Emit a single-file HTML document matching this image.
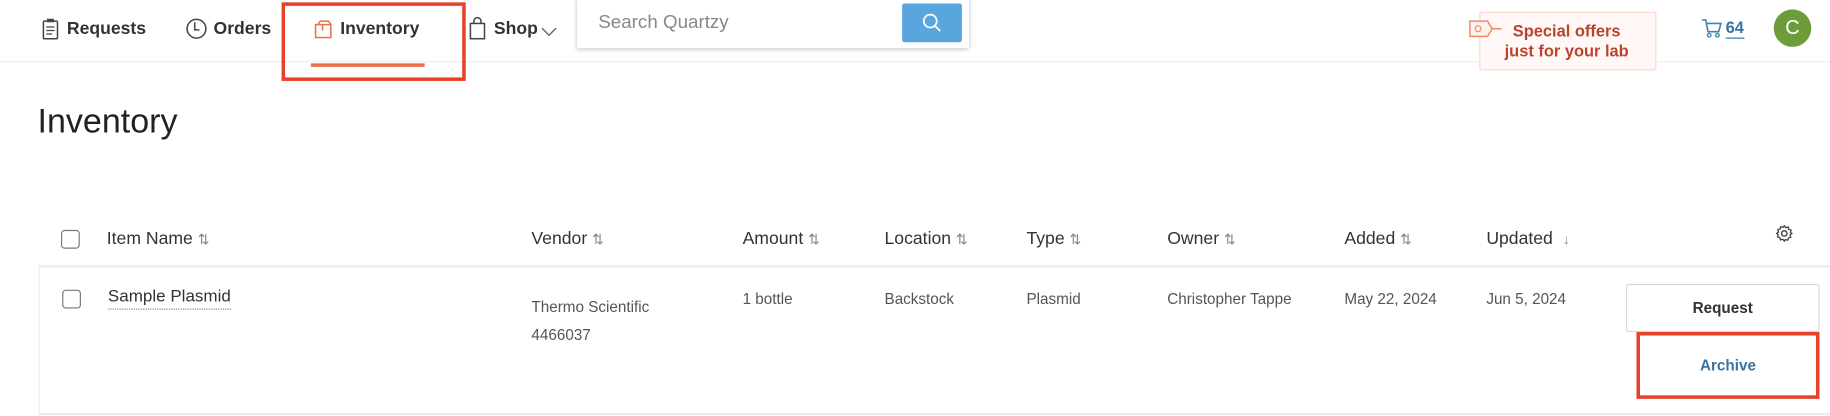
<!DOCTYPE html>
<html><head><meta charset="utf-8"><style>
html,body{margin:0;padding:0;background:#fff;overflow:hidden}
body{width:1830px;height:416px;font-family:"Liberation Sans",sans-serif;color:#2b2f33}
#s{position:absolute;left:0;top:0;width:1560px;height:355px;transform:scale(1.1731);transform-origin:0 0}
.a{position:absolute;white-space:nowrap}
.nav{font-size:15px;font-weight:bold;color:#2f3338;top:16px}
.hd{font-size:15px;color:#2f3338;top:195px}
.hd span{color:#888;font-size:12px}
.td{font-size:13px;color:#555;top:247px}
.cb{position:absolute;width:14px;height:14px;border:1.3px solid #777;border-radius:3px;background:#fff}
</style></head><body><div id="s">
<div class="a" style="left:0;top:52px;width:1560px;height:1px;background:#eee"></div>
<svg class="a" style="left:36px;top:15px" width="14" height="19" viewBox="0 0 14 19"><rect x="1" y="3" width="12" height="15" rx="1" fill="none" stroke="#444" stroke-width="1.3"/><rect x="4" y="1" width="6" height="3" fill="#444"/><path d="M3.5 8h7M3.5 11h7M3.5 14h5" stroke="#444" stroke-width="1"/></svg>
<div class="a nav" style="left:57px">Requests</div>
<svg class="a" style="left:158px;top:15px" width="19" height="19" viewBox="0 0 19 19"><circle cx="9.5" cy="9.5" r="8" fill="none" stroke="#444" stroke-width="1.3"/><path d="M8 4v6.5h4" fill="none" stroke="#444" stroke-width="1.3"/></svg>
<div class="a nav" style="left:182px">Orders</div>
<svg class="a" style="left:268px;top:17px" width="15" height="16" viewBox="0 0 15 16"><rect x="1" y="4" width="13" height="11" fill="none" stroke="#e8704a" stroke-width="1.3"/><path d="M3 4l2-3h7l2 3M7 4v5" fill="none" stroke="#e8704a" stroke-width="1.3"/></svg>
<div class="a nav" style="left:290px">Inventory</div>
<div class="a" style="left:265px;top:54px;width:97px;height:3px;background:#e8704a"></div>
<div class="a" style="left:240px;top:2px;width:151px;height:61px;border:3px solid #e8412a;box-sizing:content-box"></div>
<svg class="a" style="left:400px;top:14px" width="14" height="20" viewBox="0 0 14 20"><rect x="1" y="6" width="12" height="13" fill="none" stroke="#444" stroke-width="1.3"/><path d="M4 6V4a3 3 0 0 1 6 0v2" fill="none" stroke="#444" stroke-width="1.3"/></svg>
<div class="a nav" style="left:421px">Shop</div>
<svg class="a" style="left:461px;top:23px" width="14" height="8" viewBox="0 0 14 8"><path d="M1 1l6 6 6-6" fill="none" stroke="#666" stroke-width="1.2"/></svg>
<div class="a" style="left:492px;top:-2px;width:334px;height:43px;background:#fff;box-shadow:0 1px 4px rgba(0,0,0,.25)"></div>
<div class="a" style="left:510px;top:11px;font-size:16px;color:#888">Search Quartzy</div>
<div class="a" style="left:769px;top:3px;width:51px;height:33px;background:#58a6dd;border-radius:2px"></div>
<svg class="a" style="left:786px;top:11px" width="17" height="17" viewBox="0 0 17 17"><circle cx="7" cy="7" r="5.5" fill="none" stroke="#fff" stroke-width="1.5"/><path d="M11 11l4.5 4.5" stroke="#fff" stroke-width="1.5"/></svg>
<div class="a" style="left:1261px;top:10px;width:149px;height:48px;border:1px solid #fbd6cc;background:#fff8f6;border-radius:2px"></div>
<svg class="a" style="left:1252px;top:17px" width="30" height="15" viewBox="0 0 30 15"><path d="M1 1h15l4 6.5-4 6.5H1z" fill="#fff2ee" stroke="#ee8a6c" stroke-width="1.3"/><circle cx="8" cy="7.5" r="2.5" fill="none" stroke="#ee8a6c"/><path d="M20 7.5h8" stroke="#ee8a6c" stroke-width="1.3"/></svg>
<div class="a" style="left:1261px;top:18px;width:149px;text-align:center;font-size:14px;font-weight:bold;color:#b8442c;line-height:17px">Special offers<br>just for your lab</div>
<svg class="a" style="left:1450px;top:15px" width="18" height="18" viewBox="0 0 18 18"><path d="M1 2h3l2 10h9l2-7H5" fill="none" stroke="#3f86b5" stroke-width="1.4"/><circle cx="7" cy="15" r="1.5" fill="none" stroke="#3f86b5" stroke-width="1.2"/><circle cx="14" cy="15" r="1.5" fill="none" stroke="#3f86b5" stroke-width="1.2"/></svg>
<div class="a" style="left:1471px;top:15px;font-size:14px;font-weight:bold;color:#3a73a0;border-bottom:1.5px solid #3a73a0;line-height:17px">64</div>
<div class="a" style="left:1512px;top:8px;width:32px;height:32px;border-radius:50%;background:#6d9c3a;color:#fff;font-size:17px;text-align:center;line-height:32px">C</div>
<div class="a" style="left:32px;top:88px;font-size:29px;color:#1e2226">Inventory</div>
<div class="cb" style="left:52px;top:196px"></div>
<div class="a hd" style="left:91px">Item Name <span>⇅</span></div>
<div class="a hd" style="left:453px">Vendor <span>⇅</span></div>
<div class="a hd" style="left:633px">Amount <span>⇅</span></div>
<div class="a hd" style="left:754px">Location <span>⇅</span></div>
<div class="a hd" style="left:875px">Type <span>⇅</span></div>
<div class="a hd" style="left:995px">Owner <span>⇅</span></div>
<div class="a hd" style="left:1146px">Added <span>⇅</span></div>
<div class="a hd" style="left:1267px">Updated &nbsp;<span>↓</span></div>
<svg class="a" style="left:1513px;top:191px" width="16" height="16" viewBox="0 0 16 16"><circle cx="8" cy="8" r="2.3" fill="none" stroke="#444" stroke-width="1.2"/><path d="M8 1.5l1.3 1.6 2-.6.5 2 2 .6-.6 2L14.5 8l-1.6 1.3.6 2-2 .5-.6 2-2-.6L8 14.5l-1.3-1.6-2 .6-.5-2-2-.6.6-2L1.5 8l1.6-1.3-.6-2 2-.5.5-2 2 .6z" fill="none" stroke="#444" stroke-width="1.1"/></svg>
<div class="a" style="left:33px;top:226px;width:1526px;height:124px;border-top:2px solid #ececf0;border-bottom:2px solid #ececf0;border-left:1px solid #ececf0"></div>
<div class="cb" style="left:53px;top:247px"></div>
<div class="a" style="left:92px;top:245px;font-size:14.5px;color:#2f3338;border-bottom:1px dotted #7a8aa0;padding-bottom:2px">Sample Plasmid</div>
<div class="a td" style="left:453px;top:250px;line-height:24px">Thermo Scientific<br>4466037</div>
<div class="a td" style="left:633px">1 bottle</div>
<div class="a td" style="left:754px">Backstock</div>
<div class="a td" style="left:875px">Plasmid</div>
<div class="a td" style="left:995px">Christopher Tappe</div>
<div class="a td" style="left:1146px">May 22, 2024</div>
<div class="a td" style="left:1267px">Jun 5, 2024</div>
<div class="a" style="left:1386px;top:242px;width:163px;height:39px;border:1px solid #d8d8dc;border-radius:2px;text-align:center;line-height:39px;font-size:13px;font-weight:bold;color:#2f3338">Request</div>
<div class="a" style="left:1395px;top:283px;width:150px;height:51px;border:3px solid #e8412a;text-align:center;line-height:51px;font-size:13px;font-weight:bold;color:#3a73a0">Archive</div>
</div></body></html>
